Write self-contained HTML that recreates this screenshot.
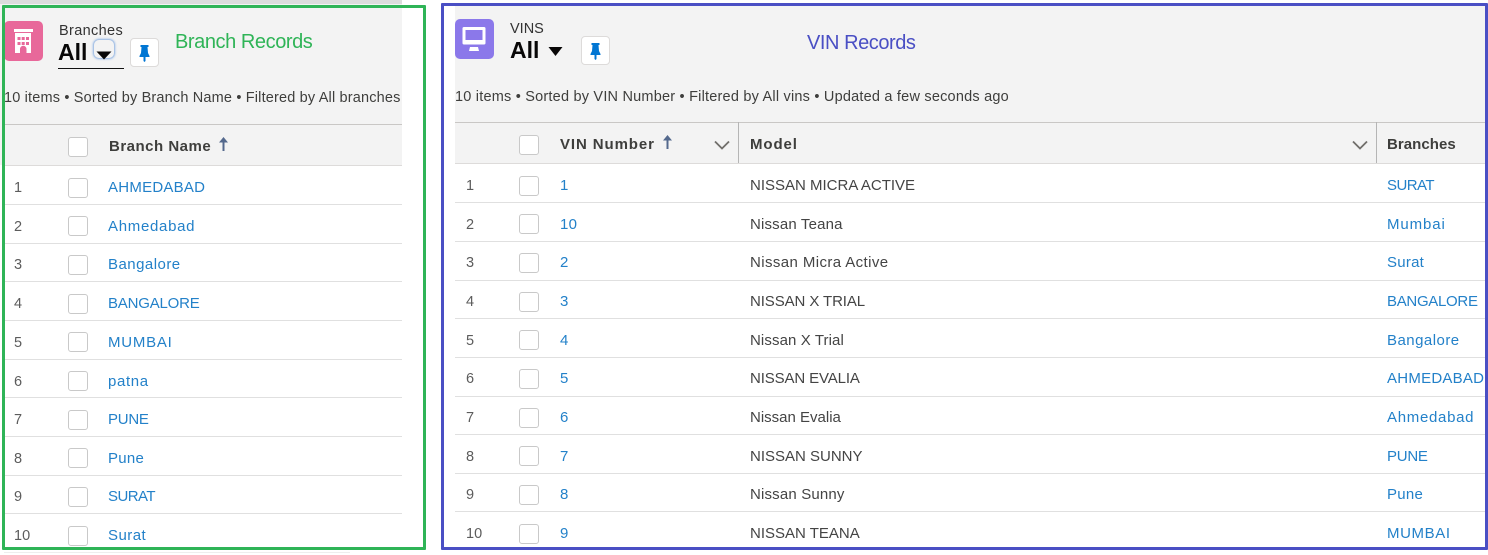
<!DOCTYPE html>
<html><head><meta charset="utf-8"><style>
html,body{margin:0;padding:0;background:#fff}
#p{position:relative;width:1488px;height:555px;overflow:hidden;background:#fff;font-family:"Liberation Sans",sans-serif;font-size:15px;color:#3e3e3c}
#p div,#p svg{position:absolute}
.t{white-space:nowrap;line-height:20px;height:20px}
.n{color:#5c5c5c;font-size:14.5px;margin-top:1px}
.a{color:#2381c9;letter-spacing:.25px;margin-top:1px}
.m{color:#444;letter-spacing:.25px;margin-top:1px}
.h{font-weight:700;font-size:15px;letter-spacing:.3px;color:#3e3e3c;margin-top:1px}
.c{width:18px;height:18px;border:1px solid #c9c9c9;border-radius:3px;background:#fff}
.l{height:1px;background:#e0e0e0}
.p{width:27px;height:27px;border:1px solid #dddbda;border-radius:4px;background:#fff}
</style></head><body><div id="p">
<div style="left:0;top:0;width:402px;height:165px;background:#f3f3f3"></div>
<div style="left:0;top:0;width:402px;height:4px;background:#dcdcdc"></div>
<div style="left:455px;top:5px;width:1030px;height:159px;background:#f3f3f3"></div>

<!-- Left header -->
<div style="left:4px;top:21px;width:39px;height:40px;border-radius:5px;background:#e8689a"></div>
<svg style="left:12px;top:27px" width="24" height="28" viewBox="0 0 24 28"><rect x="2" y="2" width="19" height="3" fill="#fff"/><path d="M3 6H19V26H14.500V22A3 3 0 0 0 8 22V26H3Z" fill="#fff"/><g fill="#e8689a"><rect x="5.500" y="10" width="3" height="3"/><rect x="9.700" y="10" width="3" height="3"/><rect x="14" y="10" width="3" height="3"/><rect x="5.500" y="15" width="3" height="3"/><rect x="9.700" y="15" width="3" height="3"/><rect x="14" y="15" width="3" height="3"/></g></svg>
<div class="t" style="left:59px;top:21px;font-size:14.5px;letter-spacing:.35px;color:#333">Branches</div>
<div class="t" style="left:58px;top:40px;font-size:23px;font-weight:700;color:#080707;line-height:24px;height:24px">All</div>
<div style="left:93px;top:39px;width:20px;height:18px;border:1px solid #a9c3e6;border-radius:6px;box-shadow:0 0 2px #8fb4e6"></div>
<svg style="left:96px;top:51px" width="16" height="9" viewBox="0 0 16 9"><path d="M0.500 0.500H15.500L8 8.500Z" fill="#080707"/></svg>
<div style="left:58px;top:68px;width:66px;height:1px;background:#111"></div>
<div class="p" style="left:130px;top:38px"></div>
<svg style="left:136px;top:44px" width="17" height="19" viewBox="0 0 17 19"><path d="M4.500 1H12.500V3H11.500L12 9L13.500 12V13H9.500V17L8.500 18L7.500 17V13H3.500V12L5 9L5.500 3H4.500Z" fill="#0176d3"/></svg>
<div class="t" style="left:175px;top:30px;font-size:20px;letter-spacing:-.43px;line-height:24px;height:24px;color:#2fb457">Branch Records</div>
<div class="t" style="left:4px;top:88px;font-size:14.5px;letter-spacing:.17px;color:#3e3e3c">10 items • Sorted by Branch Name • Filtered by All branches</div>
<div style="left:4px;top:124px;width:398px;height:1px;background:#c9c7c5"></div>
<div style="left:4px;top:165px;width:398px;height:1px;background:#dddbda"></div>
<div class="c" style="left:68px;top:137px"></div>
<div class="t h" style="left:109px;top:136px;letter-spacing:.5px">Branch Name</div>
<svg style="left:217px;top:136px" width="13" height="16" viewBox="0 0 13 16"><path d="M6.500 1L11 6.500H7.500V15H5.500V6.500H2Z" fill="#54698d"/></svg>

<!-- Left rows -->
<div class="l" style="left:4px;top:204px;width:398px"></div>
<div class="l" style="left:4px;top:243px;width:398px"></div>
<div class="l" style="left:4px;top:281px;width:398px"></div>
<div class="l" style="left:4px;top:320px;width:398px"></div>
<div class="l" style="left:4px;top:359px;width:398px"></div>
<div class="l" style="left:4px;top:397px;width:398px"></div>
<div class="l" style="left:4px;top:436px;width:398px"></div>
<div class="l" style="left:4px;top:475px;width:398px"></div>
<div class="l" style="left:4px;top:513px;width:398px"></div>
<div class="l" style="left:4px;top:552px;width:346px;background:#eee"></div>

<div class="t n" style="left:14px;top:177px">1</div><div class="c" style="left:68px;top:178px"></div><div class="t a" style="left:108px;top:177px">AHMEDABAD</div>
<div class="t n" style="left:14px;top:216px">2</div><div class="c" style="left:68px;top:216px"></div><div class="t a" style="left:108px;top:216px;letter-spacing:.7px">Ahmedabad</div>
<div class="t n" style="left:14px;top:254px">3</div><div class="c" style="left:68px;top:255px"></div><div class="t a" style="left:108px;top:254px;letter-spacing:.47px">Bangalore</div>
<div class="t n" style="left:14px;top:293px">4</div><div class="c" style="left:68px;top:294px"></div><div class="t a" style="left:108px;top:293px;letter-spacing:-.2px">BANGALORE</div>
<div class="t n" style="left:14px;top:332px">5</div><div class="c" style="left:68px;top:332px"></div><div class="t a" style="left:108px;top:332px;letter-spacing:.75px">MUMBAI</div>
<div class="t n" style="left:14px;top:371px">6</div><div class="c" style="left:68px;top:371px"></div><div class="t a" style="left:108px;top:371px;letter-spacing:.65px">patna</div>
<div class="t n" style="left:14px;top:409px">7</div><div class="c" style="left:68px;top:410px"></div><div class="t a" style="left:108px;top:409px;letter-spacing:-.25px">PUNE</div>
<div class="t n" style="left:14px;top:448px">8</div><div class="c" style="left:68px;top:448px"></div><div class="t a" style="left:108px;top:448px">Pune</div>
<div class="t n" style="left:14px;top:486px">9</div><div class="c" style="left:68px;top:487px"></div><div class="t a" style="left:108px;top:486px;letter-spacing:-.55px">SURAT</div>
<div class="t n" style="left:14px;top:525px">10</div><div class="c" style="left:68px;top:526px"></div><div class="t a" style="left:108px;top:525px;letter-spacing:.45px">Surat</div>

<!-- Right header -->
<div style="left:455px;top:19px;width:39px;height:40px;border-radius:5px;background:#8b78ea"></div>
<svg style="left:461px;top:26px" width="27" height="26" viewBox="0 0 27 26"><path d="M3 1H23A1.500 1.500 0 0 1 24.500 2.500V17A1.500 1.500 0 0 1 23 18.500H3A1.500 1.500 0 0 1 1.500 17V2.500A1.500 1.500 0 0 1 3 1ZM4.500 4V14H21.500V4Z" fill="#fff" fill-rule="evenodd"/><path d="M9 21H17L18 25H8Z" fill="#fff"/></svg>
<div class="t" style="left:510px;top:19px;font-size:14.5px;color:#333">VINS</div>
<div class="t" style="left:510px;top:38px;font-size:23px;font-weight:700;color:#080707;line-height:24px;height:24px">All</div>
<svg style="left:548px;top:46px" width="15" height="11" viewBox="0 0 15 11"><path d="M0.500 1H14.500L7.500 10Z" fill="#080707"/></svg>
<div class="p" style="left:581px;top:36px"></div>
<svg style="left:587px;top:42px" width="17" height="19" viewBox="0 0 17 19"><path d="M4.500 1H12.500V3H11.500L12 9L13.500 12V13H9.500V17L8.500 18L7.500 17V13H3.500V12L5 9L5.500 3H4.500Z" fill="#0176d3"/></svg>
<div class="t" style="left:807px;top:31px;font-size:20px;letter-spacing:-.45px;line-height:24px;height:24px;color:#4a4fc4">VIN Records</div>
<div class="t" style="left:455px;top:87px;font-size:14.5px;letter-spacing:.21px;color:#3e3e3c">10 items • Sorted by VIN Number • Filtered by All vins • Updated a few seconds ago</div>
<div style="left:455px;top:122px;width:1030px;height:1px;background:#c9c7c5"></div>
<div style="left:455px;top:163px;width:1030px;height:1px;background:#dddbda"></div>
<div style="left:738px;top:122px;width:1px;height:41px;background:#b5b5b5"></div>
<div style="left:1376px;top:122px;width:1px;height:41px;background:#b5b5b5"></div>
<div class="c" style="left:519px;top:135px"></div>
<div class="t h" style="left:560px;top:134px;letter-spacing:.9px">VIN Number</div>
<svg style="left:661px;top:134px" width="13" height="16" viewBox="0 0 13 16"><path d="M6.500 1L11 6.500H7.500V15H5.500V6.500H2Z" fill="#54698d"/></svg>
<svg style="left:714px;top:140px" width="16" height="10" viewBox="0 0 16 10"><path d="M1 1.500L8 8.500L15 1.500" fill="none" stroke="#706e6b" stroke-width="1.800"/></svg>
<div class="t h" style="left:750px;top:134px;letter-spacing:.9px">Model</div>
<svg style="left:1352px;top:140px" width="16" height="10" viewBox="0 0 16 10"><path d="M1 1.500L8 8.500L15 1.500" fill="none" stroke="#706e6b" stroke-width="1.800"/></svg>
<div class="t h" style="left:1387px;top:134px;letter-spacing:.05px">Branches</div>

<!-- Right rows -->
<div class="l" style="left:455px;top:202px;width:1030px"></div>
<div class="l" style="left:455px;top:241px;width:1030px"></div>
<div class="l" style="left:455px;top:280px;width:1030px"></div>
<div class="l" style="left:455px;top:318px;width:1030px"></div>
<div class="l" style="left:455px;top:357px;width:1030px"></div>
<div class="l" style="left:455px;top:396px;width:1030px"></div>
<div class="l" style="left:455px;top:434px;width:1030px"></div>
<div class="l" style="left:455px;top:473px;width:1030px"></div>
<div class="l" style="left:455px;top:511px;width:1030px"></div>

<div class="t n" style="left:466px;top:175px">1</div><div class="c" style="left:519px;top:176px"></div><div class="t a" style="left:560px;top:175px">1</div><div class="t m" style="left:750px;top:175px;letter-spacing:0">NISSAN MICRA ACTIVE</div><div class="t a" style="left:1387px;top:175px;letter-spacing:-.55px">SURAT</div>
<div class="t n" style="left:466px;top:214px">2</div><div class="c" style="left:519px;top:214px"></div><div class="t a" style="left:560px;top:214px">10</div><div class="t m" style="left:750px;top:214px;letter-spacing:.17px">Nissan Teana</div><div class="t a" style="left:1387px;top:214px;letter-spacing:.9px">Mumbai</div>
<div class="t n" style="left:466px;top:252px">3</div><div class="c" style="left:519px;top:253px"></div><div class="t a" style="left:560px;top:252px">2</div><div class="t m" style="left:750px;top:252px;letter-spacing:.4px">Nissan Micra Active</div><div class="t a" style="left:1387px;top:252px">Surat</div>
<div class="t n" style="left:466px;top:291px">4</div><div class="c" style="left:519px;top:292px"></div><div class="t a" style="left:560px;top:291px">3</div><div class="t m" style="left:750px;top:291px;letter-spacing:-.1px">NISSAN X TRIAL</div><div class="t a" style="left:1387px;top:291px;letter-spacing:-.3px">BANGALORE</div>
<div class="t n" style="left:466px;top:330px">5</div><div class="c" style="left:519px;top:330px"></div><div class="t a" style="left:560px;top:330px">4</div><div class="t m" style="left:750px;top:330px;letter-spacing:.1px">Nissan X Trial</div><div class="t a" style="left:1387px;top:330px;letter-spacing:.47px">Bangalore</div>
<div class="t n" style="left:466px;top:368px">6</div><div class="c" style="left:519px;top:369px"></div><div class="t a" style="left:560px;top:368px">5</div><div class="t m" style="left:750px;top:368px;letter-spacing:-.13px">NISSAN EVALIA</div><div class="t a" style="left:1387px;top:368px">AHMEDABAD</div>
<div class="t n" style="left:466px;top:407px">7</div><div class="c" style="left:519px;top:408px"></div><div class="t a" style="left:560px;top:407px">6</div><div class="t m" style="left:750px;top:407px;letter-spacing:0">Nissan Evalia</div><div class="t a" style="left:1387px;top:407px;letter-spacing:.7px">Ahmedabad</div>
<div class="t n" style="left:466px;top:446px">8</div><div class="c" style="left:519px;top:446px"></div><div class="t a" style="left:560px;top:446px">7</div><div class="t m" style="left:750px;top:446px;letter-spacing:0">NISSAN SUNNY</div><div class="t a" style="left:1387px;top:446px;letter-spacing:-.25px">PUNE</div>
<div class="t n" style="left:466px;top:484px">9</div><div class="c" style="left:519px;top:485px"></div><div class="t a" style="left:560px;top:484px">8</div><div class="t m" style="left:750px;top:484px;letter-spacing:.17px">Nissan Sunny</div><div class="t a" style="left:1387px;top:484px">Pune</div>
<div class="t n" style="left:466px;top:523px">10</div><div class="c" style="left:519px;top:524px"></div><div class="t a" style="left:560px;top:523px">9</div><div class="t m" style="left:750px;top:523px;letter-spacing:0">NISSAN TEANA</div><div class="t a" style="left:1387px;top:523px;letter-spacing:.6px">MUMBAI</div>

<!-- Annotation frames -->
<div style="left:2px;top:5px;width:418px;height:539px;border:3px solid #2fb457;border-radius:1px"></div>
<div style="left:441px;top:3px;width:1041px;height:541px;border:3px solid #4a4fc4;border-radius:1px"></div>
</div></body></html>
